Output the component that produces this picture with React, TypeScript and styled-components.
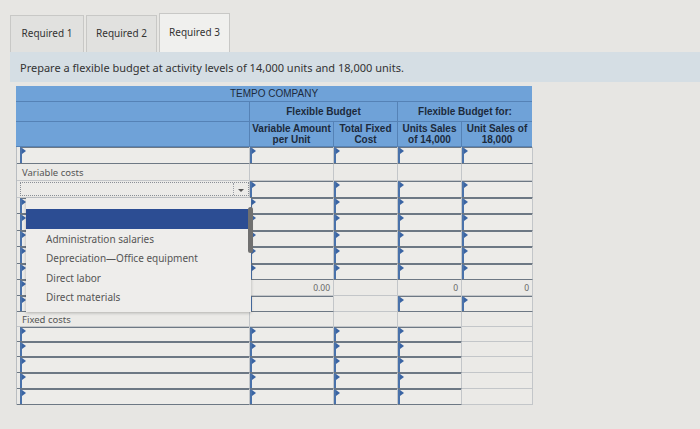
import React from "react";
import styled, { createGlobalStyle, css } from "styled-components";

const GlobalStyle = createGlobalStyle`
  html, body {
    margin: 0;
    padding: 0;
    background: #e7e6e3;
    font-family: "Noto Sans", "Open Sans", sans-serif;
    color: #333;
  }
`;

const COLS = "233px 84px 64px 64px 71px";

type CellKind = "input" | "box" | "plain" | "value";
type LabelKind = "input" | "text" | "select";

interface IRow {
  label: LabelKind;
  text?: string;
  cells: { kind: CellKind; value?: string }[];
}

const inputs = (n: number) => Array.from({ length: n }, () => ({ kind: "input" as CellKind }));
const plains = (n: number) => Array.from({ length: n }, () => ({ kind: "plain" as CellKind }));

const rows: IRow[] = [
  { label: "input", cells: inputs(4) },
  { label: "text", text: "Variable costs", cells: plains(4) },
  { label: "select", cells: inputs(4) },
  { label: "input", cells: inputs(4) },
  { label: "input", cells: inputs(4) },
  { label: "input", cells: inputs(4) },
  { label: "input", cells: inputs(4) },
  { label: "input", cells: inputs(4) },
  {
    label: "input",
    cells: [
      { kind: "value", value: "0.00" },
      { kind: "plain" },
      { kind: "value", value: "0" },
      { kind: "value", value: "0" },
    ],
  },
  {
    label: "input",
    cells: [{ kind: "box" }, { kind: "plain" }, { kind: "input" }, { kind: "input" }],
  },
  { label: "text", text: "Fixed costs", cells: plains(4) },
  ...Array.from({ length: 5 }, () => ({
    label: "input" as LabelKind,
    cells: [...inputs(3), { kind: "plain" as CellKind }],
  })),
];

// row heights follow the screenshot, slightly taller at the top
const heights = [17, 17, 17, 16, 17, 16, 17, 16, 16, 16, 15, 15, 15, 16, 16, 16];

const options = [
  "Administration salaries",
  "Depreciation\u2014Office equipment",
  "Direct labor",
  "Direct materials",
];

const App = () => {
  return (
    <>
      <GlobalStyle />
      <Page>
        <Tabs>
          <Tab $width={74}>Required 1</Tab>
          <Tab $width={71}>Required 2</Tab>
          <Tab $width={71} $active>
            Required 3
          </Tab>
        </Tabs>
        <Instruction>
          Prepare a flexible budget at activity levels of 14,000 units and 18,000 units.
        </Instruction>
        <Table>
          <HeadRow $height={16}>
            <HeadCell $span={5}>TEMPO COMPANY</HeadCell>
          </HeadRow>
          <HeadRow $height={20}>
            <HeadCell $blank />
            <HeadCell $span={2} $bold>
              Flexible Budget
            </HeadCell>
            <HeadCell $span={2} $bold>
              Flexible Budget for:
            </HeadCell>
          </HeadRow>
          <HeadRow $height={25}>
            <HeadCell $blank />
            <HeadCell $bold>
              Variable Amount
              <br />
              per Unit
            </HeadCell>
            <HeadCell $bold>
              Total Fixed
              <br />
              Cost
            </HeadCell>
            <HeadCell $bold>
              Units Sales
              <br />
              of 14,000
            </HeadCell>
            <HeadCell $bold>
              Unit Sales of
              <br />
              18,000
            </HeadCell>
          </HeadRow>
          <Body>
            {rows.map((row, i) => (
              <BodyRow key={i} $height={heights[i]}>
                <LabelCell $input={row.label === "input"}>
                  {row.label === "text" && <LabelText>{row.text}</LabelText>}
                  {row.label === "input" && <InputBox $marker />}
                  {row.label === "select" && (
                    <SelectBox>
                      <SelectArrow />
                    </SelectBox>
                  )}
                </LabelCell>
                {row.cells.map((c, j) => (
                  <DataCell key={j} $input={c.kind === "input" || c.kind === "box"}>
                    {c.kind === "input" && <InputBox $marker />}
                    {c.kind === "box" && <InputBox />}
                    {c.kind === "value" && <Value>{c.value}</Value>}
                  </DataCell>
                ))}
              </BodyRow>
            ))}
            <Dropdown>
              <Highlight />
              {options.map((o) => (
                <Option key={o}>{o}</Option>
              ))}
              <ScrollThumb />
            </Dropdown>
          </Body>
        </Table>
      </Page>
    </>
  );
};

export default App;

const Page = styled.div`
  width: 700px;
  height: 429px;
  padding-top: 14px;
  box-sizing: border-box;
  overflow: hidden;
`;

const Tabs = styled.div`
  display: flex;
  align-items: flex-end;
  gap: 2px;
  padding-left: 10px;
  height: 38px;
`;

const Tab = styled.div<{ $width: number; $active?: boolean }>`
  width: ${({ $width }) => $width}px;
  height: ${({ $active }) => ($active ? 39 : 37)}px;
  box-sizing: border-box;
  display: flex;
  align-items: center;
  justify-content: center;
  font-size: 10px;
  color: #333;
  background: ${({ $active }) => ($active ? "#f0f0ee" : "#e1e1df")};
  border: 1px solid #c8c8c6;
  border-bottom: none;
  padding-bottom: 2px;
`;

const Instruction = styled.div`
  margin-left: 10px;
  height: 30px;
  background: #d5dee4;
  display: flex;
  align-items: center;
  padding-left: 10px;
  font-size: 11px;
  color: #333;
`;

const Table = styled.div`
  margin: 4px 0 0 16px;
  width: 516px;
`;

const HeadRow = styled.div<{ $height: number }>`
  display: grid;
  grid-template-columns: ${COLS};
  height: ${({ $height }) => $height}px;
  background: #6fa2d8;
  border-bottom: 1px solid #5582b6;
  box-sizing: border-box;
`;

const HeadCell = styled.div<{ $span?: number; $bold?: boolean; $blank?: boolean }>`
  grid-column: span ${({ $span }) => $span ?? 1};
  display: flex;
  align-items: center;
  justify-content: center;
  text-align: center;
  font-family: "Liberation Sans", Arial, sans-serif;
  font-size: 10px;
  line-height: 11px;
  font-weight: ${({ $bold }) => ($bold ? 700 : 400)};
  color: #1c2a3c;
  ${({ $blank }) =>
    !$blank &&
    css`
      border-left: 1px solid #5582b6;
    `}
  &:first-child {
    border-left: none;
  }
`;

const Body = styled.div`
  position: relative;
  border-left: 1px solid #b9bdc1;
`;

const BodyRow = styled.div<{ $height: number }>`
  display: grid;
  grid-template-columns: ${COLS};
  height: ${({ $height }) => $height}px;
`;

const CellBase = styled.div<{ $input?: boolean }>`
  position: relative;
  box-sizing: border-box;
  border-right: 1px solid #c3c6c9;
  border-bottom: 1px solid ${({ $input }) => ($input ? "#6d7884" : "#c3c6c9")};
  background: #ebeae7;
  display: flex;
  align-items: stretch;
`;

const LabelCell = styled(CellBase)`
  padding-left: 3px;
`;

const DataCell = styled(CellBase)``;

const LabelText = styled.span`
  font-size: 9.5px;
  color: #555;
  align-self: center;
  padding-left: 2px;
`;

const InputBox = styled.div<{ $marker?: boolean }>`
  position: relative;
  flex: 1;
  background: #edece9;
  border-top: 1px solid #6d7884;
  border-left: 2px solid #4a72aa;
  ${({ $marker }) =>
    $marker &&
    css`
      &::before {
        content: "";
        position: absolute;
        top: 0;
        left: 0;
        border-top: 3px solid transparent;
        border-bottom: 3px solid transparent;
        border-left: 4px solid #3a64a3;
      }
    `}
`;

const SelectBox = styled.div`
  position: relative;
  flex: 1;
  margin: 1px 0 1px 0;
  border: 1px dotted #8a8f96;
  background: #ecebe8;
`;

const SelectArrow = styled.div`
  position: absolute;
  right: 0;
  top: 0;
  bottom: 0;
  width: 14px;
  border-left: 1px dotted #9a9ea4;
  &::after {
    content: "";
    position: absolute;
    left: 4px;
    top: 6px;
    border-left: 3px solid transparent;
    border-right: 3px solid transparent;
    border-top: 3px solid #555;
  }
`;

const Value = styled.span`
  flex: 1;
  text-align: right;
  align-self: center;
  padding-right: 3px;
  font-size: 8.5px;
  color: #666;
`;

const Dropdown = styled.div`
  position: absolute;
  top: 51px;
  left: 9px;
  width: 225px;
  height: 114px;
  box-sizing: border-box;
  padding-top: 11px;
  background: #eeedeb;
  box-shadow: 0 1px 3px rgba(0, 0, 0, 0.25);
`;

const Highlight = styled.div`
  height: 20px;
  margin-right: 3px;
  background: #2c4d93;
`;

const Option = styled.div`
  height: 19.5px;
  display: flex;
  align-items: center;
  padding-left: 20px;
  font-size: 10px;
  color: #555;
`;

const ScrollThumb = styled.div`
  position: absolute;
  left: 222px;
  top: 9px;
  width: 5px;
  height: 46px;
  border-radius: 3px;
  background: #707070;
`;
